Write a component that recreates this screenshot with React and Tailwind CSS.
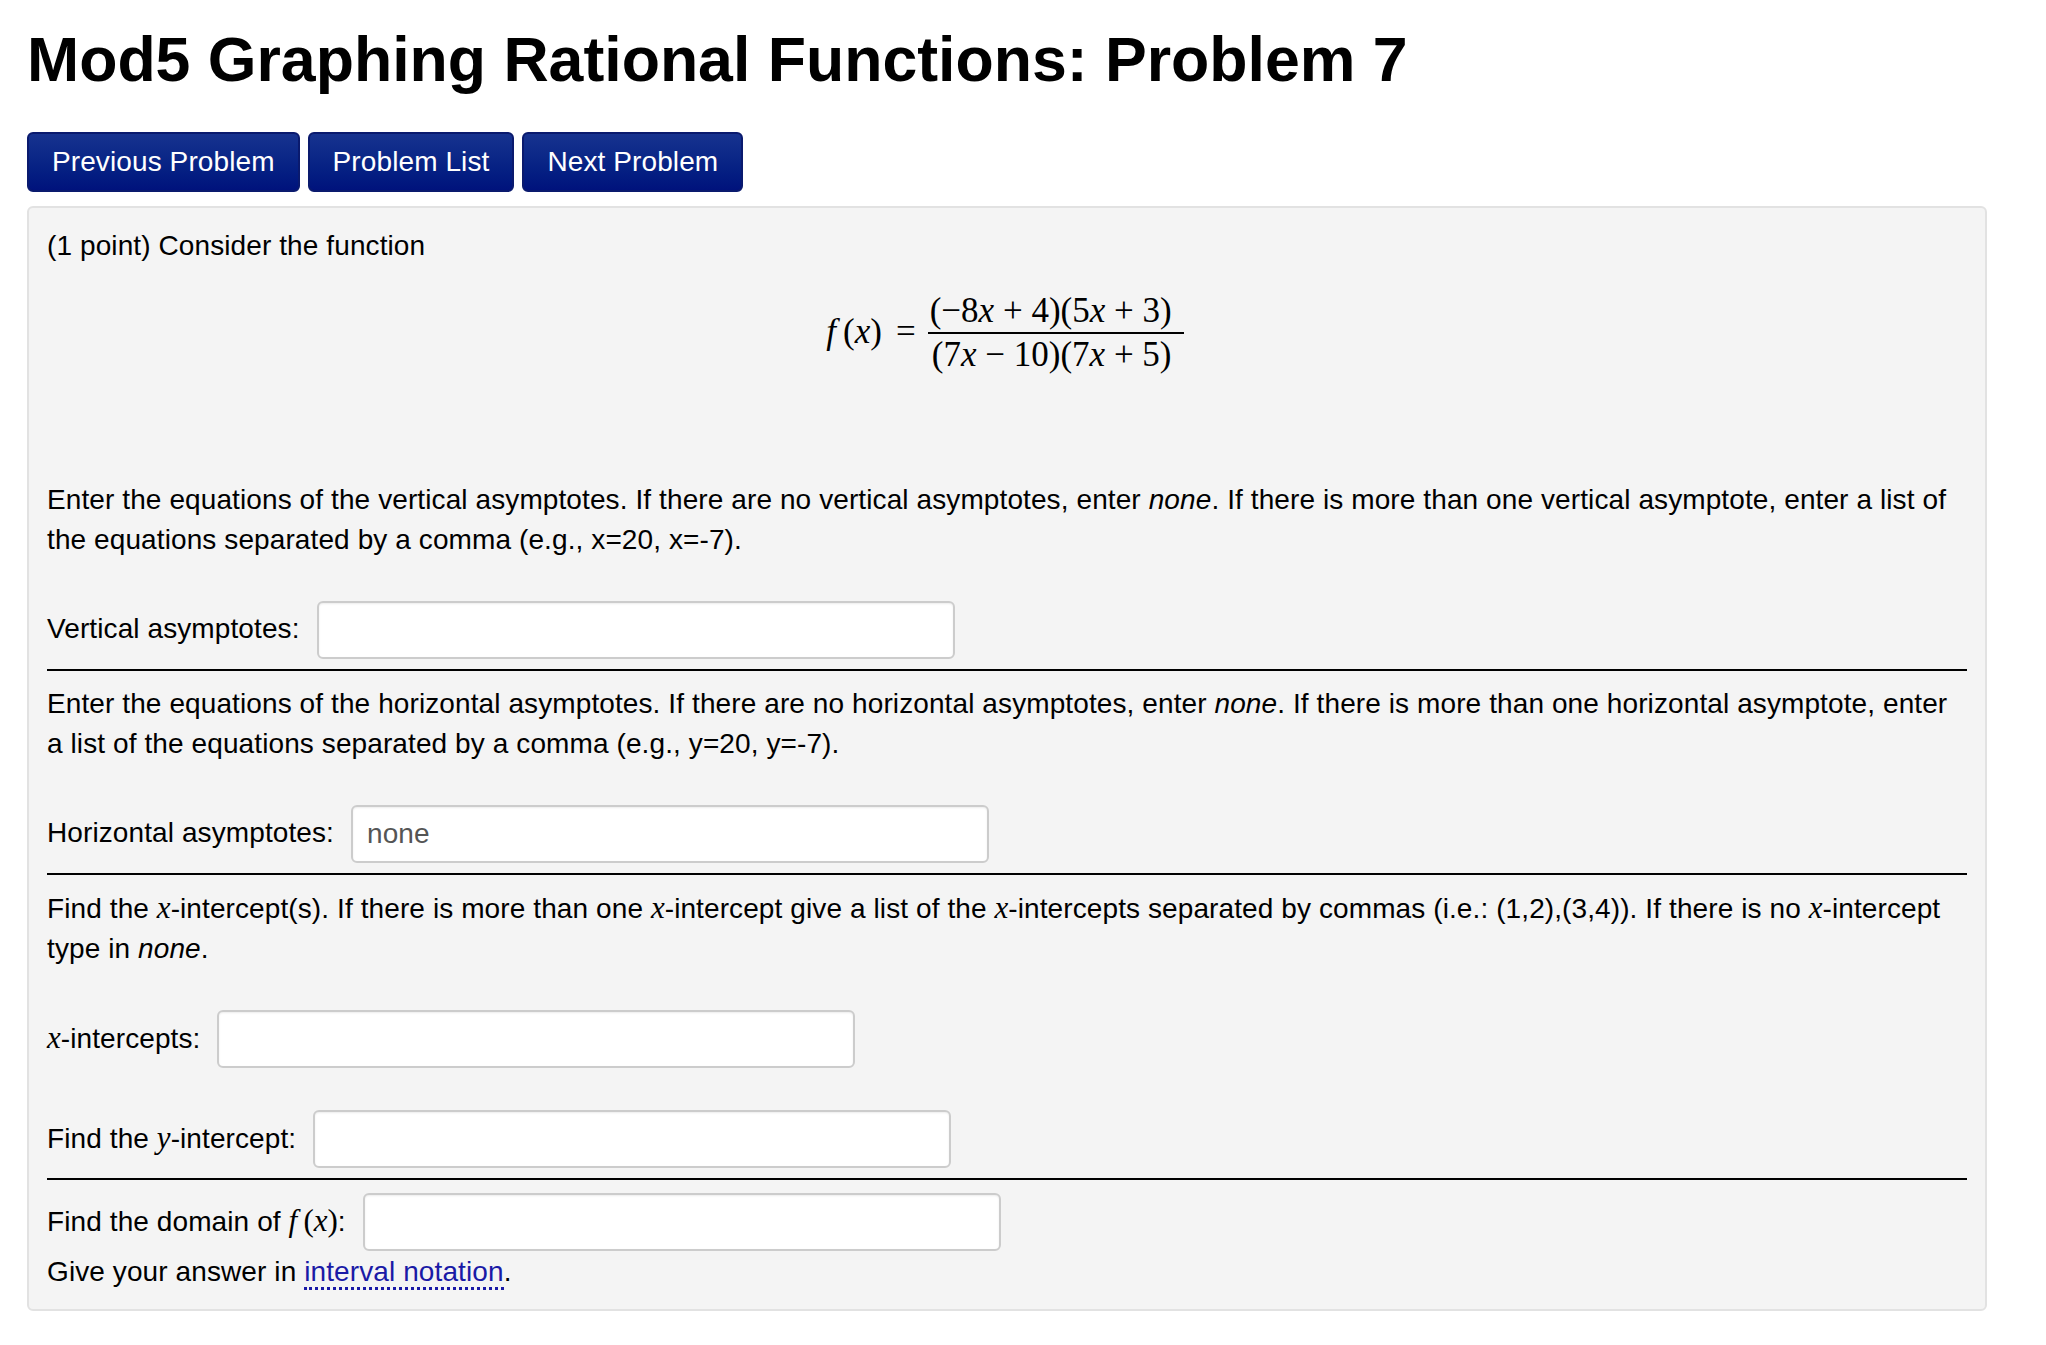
import React from "react";

function MathX({ children }) {
  return (
    <span className="font-['Liberation_Serif',serif] italic text-[31px] tracking-normal">
      {children}
    </span>
  );
}

function Answer({ value }) {
  return (
    <input
      type="text"
      defaultValue={value}
      className="w-[638px] h-[58px] bg-white border-2 border-[#cccccc] rounded-[6px] px-[14px] text-[28px] text-[#555555] shadow-[inset_0_1px_2px_rgba(0,0,0,0.08)] outline-none"
    />
  );
}

function AnswerRow({ label, value, className = "" }) {
  return (
    <div className={"flex items-center gap-[17px] " + className}>
      <span>{label}</span>
      <Answer value={value} />
    </div>
  );
}

function Rule({ className = "" }) {
  return <div className={"h-[2px] bg-black " + className} />;
}

export default function App() {
  const buttons = ["Previous Problem", "Problem List", "Next Problem"];

  return (
    <div className="min-h-screen bg-white pl-[27px] pr-[59px] pb-10 font-['Liberation_Sans',Arial,sans-serif] text-black">
      <h1 className="pt-[24px] text-[62.6px] leading-[70px] font-bold">
        Mod5 Graphing Rational Functions: Problem 7
      </h1>

      <div className="mt-[38px] flex gap-[8px]">
        {buttons.map((b) => (
          <button
            key={b}
            className="px-[23px] py-[8px] text-[28px] leading-[40px] tracking-[0.1px] text-white rounded-[6px] border-2 border-[#0a1a6e] bg-linear-to-b from-[#17338f] to-[#00127c]"
          >
            {b}
          </button>
        ))}
      </div>

      <div className="mt-[14px] bg-[#f4f4f4] border-2 border-[#e2e2e2] rounded-[6px] pt-[18px] pb-[17px] px-[18px] text-[28px] leading-[40.5px] tracking-[0.1px]">
        <p>(1 point) Consider the function</p>

        {/* equation */}
        <div className="mt-[24px] flex items-center justify-center pr-[4px] font-['Liberation_Serif',serif] text-[35px] tracking-normal">
          <span>
            <i>f</i>&thinsp;(<i>x</i>)
          </span>
          <span className="ml-[14px]">=</span>
          <span className="ml-[12px] inline-flex flex-col items-stretch">
            <span className="h-[40px] leading-[40px] pl-[2px] pr-[12px] text-center">
              (−8<i>x</i> + 4)(5<i>x</i> + 3)
            </span>
            <span className="mt-[1px] h-[2px] bg-black" />
            <span className="mt-[1px] h-[40px] leading-[40px] pl-[4px] pr-[12px] text-center">
              (7<i>x</i> − 10)(7<i>x</i> + 5)
            </span>
          </span>
        </div>

        <p className="mt-[105px]">
          Enter the equations of the vertical asymptotes. If there are no vertical asymptotes, enter{" "}
          <i>none</i>. If there is more than one vertical asymptote, enter a list of the equations
          separated by a comma (e.g., x=20, x=-7).
        </p>
        <AnswerRow label="Vertical asymptotes:" className="mt-[40px]" />
        <Rule className="mt-[10px]" />

        <p className="mt-[13px]">
          Enter the equations of the horizontal asymptotes. If there are no horizontal asymptotes,
          enter <i>none</i>. If there is more than one horizontal asymptote, enter a list of the
          equations separated by a comma (e.g., y=20, y=-7).
        </p>
        <AnswerRow label="Horizontal asymptotes:" value="none" className="mt-[40px]" />
        <Rule className="mt-[10px]" />

        <p className="mt-[13px]">
          Find the <MathX>x</MathX>-intercept(s). If there is more than one <MathX>x</MathX>-intercept
          give a list of the <MathX>x</MathX>-intercepts separated by commas (i.e.: (1,2),(3,4)). If
          there is no <MathX>x</MathX>-intercept type in <i>none</i>.
        </p>
        <AnswerRow
          label={
            <>
              <MathX>x</MathX>-intercepts:
            </>
          }
          className="mt-[40px]"
        />
        <AnswerRow
          label={
            <>
              Find the <MathX>y</MathX>-intercept:
            </>
          }
          className="mt-[42px]"
        />
        <Rule className="mt-[10px]" />

        <AnswerRow
          label={
            <>
              Find the domain of{" "}
              <span className="font-['Liberation_Serif',serif] text-[31px] tracking-normal">
                <i>f</i>&thinsp;(<i>x</i>)
              </span>
              :
            </>
          }
          className="mt-[13px]"
        />
        <p className="mt-[1px]">
          Give your answer in{" "}
          <span className="text-[#1a1aa6] border-b-[3px] border-dotted border-[#1a1aa6]">
            interval notation
          </span>
          .
        </p>
      </div>
    </div>
  );
}
